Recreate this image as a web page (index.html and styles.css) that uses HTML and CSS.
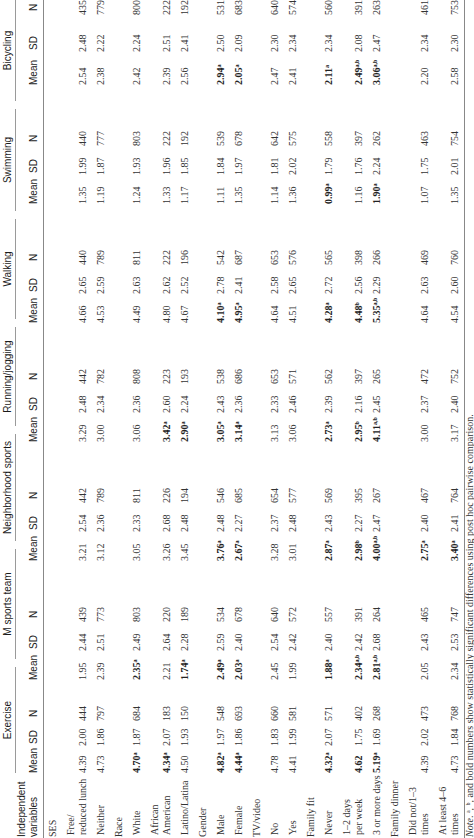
FILE: index.html
```html
<!DOCTYPE html>
<html>
<head>
<meta charset="utf-8">
<link rel="stylesheet" href="styles.css">
</head>
<body>
<div class="page">
  <div class="rot">
    <div class="groups">
      <div class="grp g1">Exercise</div>
      <div class="grp g2">M sports team</div>
      <div class="grp g3">Neighborhood sports</div>
      <div class="grp g4">Running/jogging</div>
      <div class="grp g5">Walking</div>
      <div class="grp g6">Swimming</div>
      <div class="grp g7">Bicycling</div>
    </div>
    <table class="tbl">
      <colgroup>
        <col class="c-iv">
        <col class="c-m1"><col class="c-sd1"><col class="c-n1">
        <col class="c-m"><col class="c-sd"><col class="c-n">
        <col class="c-m"><col class="c-sd"><col class="c-n">
        <col class="c-m"><col class="c-sd"><col class="c-n">
        <col class="c-m"><col class="c-sd"><col class="c-n">
        <col class="c-m"><col class="c-sd"><col class="c-n">
        <col class="c-m7"><col class="c-sd7"><col class="c-n7">
      </colgroup>
      <thead>
        <tr class="sub">
          <th class="iv">Independent<br>variables</th>
          <th class="hm">Mean</th><th class="hs">SD</th><th class="hn">N</th>
          <th class="hm">Mean</th><th class="hs">SD</th><th class="hn">N</th>
          <th class="hm">Mean</th><th class="hs">SD</th><th class="hn">N</th>
          <th class="hm">Mean</th><th class="hs">SD</th><th class="hn">N</th>
          <th class="hm">Mean</th><th class="hs">SD</th><th class="hn">N</th>
          <th class="hm">Mean</th><th class="hs">SD</th><th class="hn">N</th>
          <th class="hm">Mean</th><th class="hs">SD</th><th class="hn">N</th>
        </tr>
      </thead>
      <tbody>
        <tr><td class="lab">SES</td><td colspan="21"></td></tr>
        <tr><td class="lab sub2">Free/<br>reduced lunch</td>
          <td>4.39</td><td>2.00</td><td>444</td>
          <td>1.95</td><td>2.44</td><td>439</td>
          <td>3.21</td><td>2.54</td><td>442</td>
          <td>3.29</td><td>2.48</td><td>442</td>
          <td>4.66</td><td>2.65</td><td>440</td>
          <td>1.35</td><td>1.99</td><td>440</td>
          <td>2.54</td><td>2.48</td><td>435</td></tr>
        <tr><td class="lab sub2">Neither</td>
          <td>4.73</td><td>1.86</td><td>797</td>
          <td>2.39</td><td>2.51</td><td>773</td>
          <td>3.12</td><td>2.36</td><td>789</td>
          <td>3.00</td><td>2.34</td><td>782</td>
          <td>4.53</td><td>2.59</td><td>789</td>
          <td>1.19</td><td>1.87</td><td>777</td>
          <td>2.38</td><td>2.22</td><td>779</td></tr>
        <tr><td class="lab">Race</td><td colspan="21"></td></tr>
        <tr><td class="lab sub2">White</td>
          <td><b>4.70<sup>a</sup></b></td><td>1.87</td><td>684</td>
          <td><b>2.35<sup>a</sup></b></td><td>2.49</td><td>803</td>
          <td>3.05</td><td>2.33</td><td>811</td>
          <td>3.06</td><td>2.36</td><td>808</td>
          <td>4.49</td><td>2.63</td><td>811</td>
          <td>1.24</td><td>1.93</td><td>803</td>
          <td>2.42</td><td>2.24</td><td>800</td></tr>
        <tr><td class="lab sub2">African<br>American</td>
          <td><b>4.34<sup>a</sup></b></td><td>2.07</td><td>183</td>
          <td>2.21</td><td>2.64</td><td>220</td>
          <td>3.26</td><td>2.68</td><td>226</td>
          <td><b>3.42<sup>a</sup></b></td><td>2.60</td><td>223</td>
          <td>4.80</td><td>2.62</td><td>222</td>
          <td>1.33</td><td>1.96</td><td>222</td>
          <td>2.39</td><td>2.51</td><td>222</td></tr>
        <tr><td class="lab sub2">Latino/Latina</td>
          <td>4.50</td><td>1.93</td><td>150</td>
          <td><b>1.74<sup>a</sup></b></td><td>2.28</td><td>189</td>
          <td>3.45</td><td>2.48</td><td>194</td>
          <td><b>2.90<sup>a</sup></b></td><td>2.24</td><td>193</td>
          <td>4.67</td><td>2.52</td><td>196</td>
          <td>1.17</td><td>1.85</td><td>192</td>
          <td>2.56</td><td>2.41</td><td>192</td></tr>
        <tr><td class="lab">Gender</td><td colspan="21"></td></tr>
        <tr><td class="lab sub2">Male</td>
          <td><b>4.82<sup>a</sup></b></td><td>1.97</td><td>548</td>
          <td><b>2.49<sup>a</sup></b></td><td>2.59</td><td>534</td>
          <td><b>3.76<sup>a</sup></b></td><td>2.48</td><td>546</td>
          <td><b>3.05<sup>a</sup></b></td><td>2.43</td><td>538</td>
          <td><b>4.10<sup>a</sup></b></td><td>2.78</td><td>542</td>
          <td>1.11</td><td>1.84</td><td>539</td>
          <td><b>2.94<sup>a</sup></b></td><td>2.50</td><td>531</td></tr>
        <tr><td class="lab sub2">Female</td>
          <td><b>4.44<sup>a</sup></b></td><td>1.86</td><td>693</td>
          <td><b>2.03<sup>a</sup></b></td><td>2.40</td><td>678</td>
          <td><b>2.67<sup>a</sup></b></td><td>2.27</td><td>685</td>
          <td><b>3.14<sup>a</sup></b></td><td>2.36</td><td>686</td>
          <td><b>4.95<sup>a</sup></b></td><td>2.41</td><td>687</td>
          <td>1.35</td><td>1.97</td><td>678</td>
          <td><b>2.05<sup>a</sup></b></td><td>2.09</td><td>683</td></tr>
        <tr><td class="lab">TV/video</td><td colspan="21"></td></tr>
        <tr><td class="lab sub2">No</td>
          <td>4.78</td><td>1.83</td><td>660</td>
          <td>2.45</td><td>2.54</td><td>640</td>
          <td>3.28</td><td>2.37</td><td>654</td>
          <td>3.13</td><td>2.33</td><td>653</td>
          <td>4.64</td><td>2.58</td><td>653</td>
          <td>1.14</td><td>1.81</td><td>642</td>
          <td>2.47</td><td>2.30</td><td>640</td></tr>
        <tr><td class="lab sub2">Yes</td>
          <td>4.41</td><td>1.99</td><td>581</td>
          <td>1.99</td><td>2.42</td><td>572</td>
          <td>3.01</td><td>2.48</td><td>577</td>
          <td>3.06</td><td>2.46</td><td>571</td>
          <td>4.51</td><td>2.65</td><td>576</td>
          <td>1.36</td><td>2.02</td><td>575</td>
          <td>2.41</td><td>2.34</td><td>574</td></tr>
        <tr><td class="lab">Family fit</td><td colspan="21"></td></tr>
        <tr><td class="lab sub2">Never</td>
          <td><b>4.32<sup>a</sup></b></td><td>2.07</td><td>571</td>
          <td><b>1.88<sup>a</sup></b></td><td>2.40</td><td>557</td>
          <td><b>2.87<sup>a</sup></b></td><td>2.43</td><td>569</td>
          <td><b>2.73<sup>a</sup></b></td><td>2.39</td><td>562</td>
          <td><b>4.28<sup>a</sup></b></td><td>2.72</td><td>565</td>
          <td><b>0.99<sup>a</sup></b></td><td>1.79</td><td>558</td>
          <td><b>2.11<sup>a</sup></b></td><td>2.34</td><td>560</td></tr>
        <tr><td class="lab sub2">1–2 days<br>per week</td>
          <td><b>4.62</b></td><td>1.75</td><td>402</td>
          <td><b>2.34<sup>a,b</sup></b></td><td>2.42</td><td>391</td>
          <td><b>2.98<sup>b</sup></b></td><td>2.27</td><td>395</td>
          <td><b>2.95<sup>b</sup></b></td><td>2.16</td><td>397</td>
          <td><b>4.48<sup>b</sup></b></td><td>2.56</td><td>398</td>
          <td>1.16</td><td>1.76</td><td>397</td>
          <td><b>2.49<sup>a,b</sup></b></td><td>2.08</td><td>391</td></tr>
        <tr><td class="lab sub2">3 or more days</td>
          <td><b>5.19<sup>a</sup></b></td><td>1.69</td><td>268</td>
          <td><b>2.81<sup>a,b</sup></b></td><td>2.68</td><td>264</td>
          <td><b>4.00<sup>a,b</sup></b></td><td>2.47</td><td>267</td>
          <td><b>4.11<sup>a,b</sup></b></td><td>2.45</td><td>265</td>
          <td><b>5.35<sup>a,b</sup></b></td><td>2.29</td><td>266</td>
          <td><b>1.90<sup>a</sup></b></td><td>2.24</td><td>262</td>
          <td><b>3.06<sup>a,b</sup></b></td><td>2.47</td><td>263</td></tr>
        <tr><td class="lab">Family dinner</td><td colspan="21"></td></tr>
        <tr><td class="lab sub2">Did not/1–3<br>times</td>
          <td>4.39</td><td>2.02</td><td>473</td>
          <td>2.05</td><td>2.43</td><td>465</td>
          <td><b>2.75<sup>a</sup></b></td><td>2.40</td><td>467</td>
          <td>3.00</td><td>2.37</td><td>472</td>
          <td>4.64</td><td>2.63</td><td>469</td>
          <td>1.07</td><td>1.75</td><td>463</td>
          <td>2.20</td><td>2.34</td><td>461</td></tr>
        <tr><td class="lab sub2">At least 4–6<br>times</td>
          <td>4.73</td><td>1.84</td><td>768</td>
          <td>2.34</td><td>2.53</td><td>747</td>
          <td><b>3.40<sup>a</sup></b></td><td>2.41</td><td>764</td>
          <td>3.17</td><td>2.40</td><td>752</td>
          <td>4.54</td><td>2.60</td><td>760</td>
          <td>1.35</td><td>2.01</td><td>754</td>
          <td>2.58</td><td>2.30</td><td>753</td></tr>
      </tbody>
    </table>
    <p class="note"><i>Note</i>. <sup>a</sup>, <sup>b</sup>, and bold numbers show statistically significant differences using post hoc pairwise comparison.</p>
  </div>
</div>
</body>
</html>
```

FILE: styles.css
```css
html, body {
  margin: 0;
  padding: 0;
  background: #ffffff;
}

.page {
  width: 474px;
  height: 838px;
  overflow: hidden;
  background: #ffffff;
}

.rot {
  width: 838px;
  height: 474px;
  overflow: hidden;
  transform-origin: 0 0;
  transform: translateY(838px) rotate(-90deg);
  background: #ffffff;
}

/* group headings with their rules */
.groups {
  display: flex;
  gap: 8px;
  height: 16px;
  padding-left: 65px;
  font-family: "Liberation Sans", Arial, sans-serif;
  font-size: 10px;
  line-height: 12px;
  color: #1a1a1a;
  white-space: nowrap;
}

.grp {
  flex: none;
  box-sizing: border-box;
  height: 16px;
  padding-top: 2px;
  text-align: center;
  border-bottom: 1px solid #9a9a9a;
}

.g1 { width: 106px; }
.g2 { width: 110px; }
.g3 { width: 107px; }
.g4 { width: 99px; }
.g5 { width: 100px; }
.g6 { width: 102px; }
.g7 { width: 101px; }

.tbl {
  width: 863px;
  table-layout: fixed;
  border-collapse: collapse;
  font-family: "Liberation Serif", "Times New Roman", serif;
  font-size: 10px;
  color: #333333;
}

.c-iv { width: 65px; }
.c-m1 { width: 27px; }
.c-sd1 { width: 25px; }
.c-n1 { width: 41px; }
.c-m { width: 29px; }
.c-sd { width: 29px; }
.c-n { width: 61px; }
.c-m7 { width: 33px; }
.c-sd7 { width: 37px; }
.c-n7 { width: 40px; }

.tbl th {
  font-family: "Liberation Sans", Arial, sans-serif;
  font-weight: normal;
  font-size: 10px;
  color: #1a1a1a;
  text-align: left;
  padding: 0 0 3px 0;
  height: 23px;
  line-height: 12px;
  vertical-align: bottom;
  white-space: nowrap;
}

.tbl th.iv {
  padding-left: 1px;
}

.tbl th.hs {
  padding-left: 2px;
}

.tbl th.hn {
  padding-left: 4px;
}

thead {
  border-bottom: 1px solid #888888;
}

.tbl td {
  padding: 3px 0;
  line-height: 12px;
  vertical-align: bottom;
  white-space: nowrap;
  text-align: left;
}

.tbl td.lab {
  padding-left: 1px;
}

.tbl td.sub2 {
  padding-left: 3px;
}

.tbl b {
  font-weight: bold;
  color: #222222;
}

.tbl sup, .note sup {
  font-size: 6px;
  line-height: 0;
  vertical-align: 3.5px;
}

tbody {
  border-bottom: 1px solid #888888;
}

.note {
  margin: 0 0 0 1px;
  font-family: "Liberation Serif", "Times New Roman", serif;
  font-size: 10px;
  line-height: 10px;
  color: #333333;
  white-space: nowrap;
}
```
